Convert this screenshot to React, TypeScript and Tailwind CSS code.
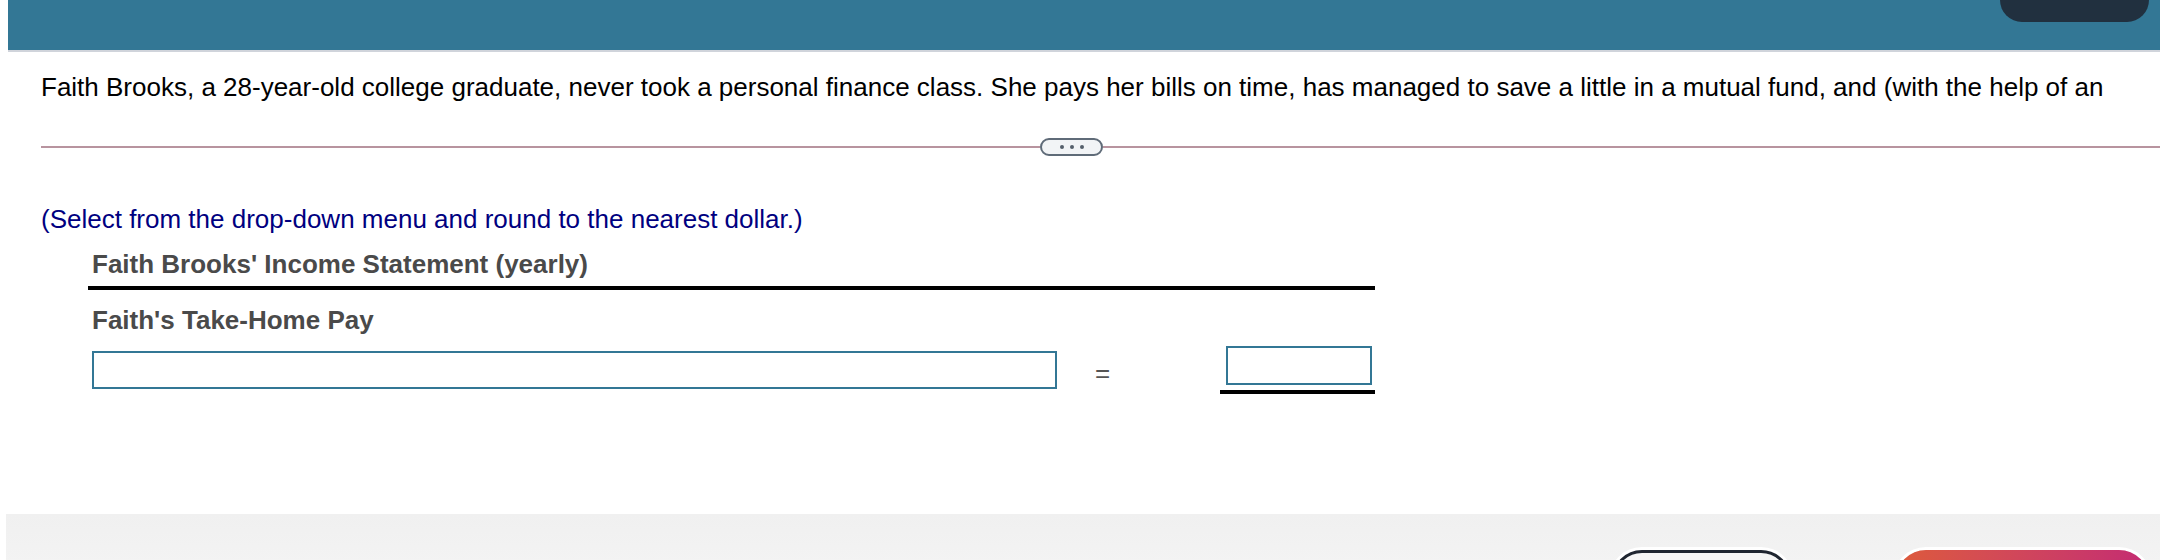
import React from "react";

export default function App() {
  return (
    <div className="w-[2160px] h-[560px] bg-white overflow-hidden flex flex-col font-['Liberation_Sans',Arial,sans-serif]">
      {/* header */}
      <div className="pl-[8px]">
        <div className="h-[50px] bg-[#337795] flex justify-end pr-[11px]">
          <div className="w-[149px] h-[22px] bg-[#21303f] rounded-b-[22px]" />
        </div>
        <div className="h-[2px] bg-[#d0d4db]" />
      </div>

      {/* main */}
      <div className="pl-[41px]">
        <div className="mt-[20px] h-[30px] leading-[30px] text-[26px] text-black whitespace-nowrap overflow-hidden">
          Faith Brooks, a 28-year-old college graduate, never took a personal finance class. She pays her bills on time, has managed to save a little in a mutual fund, and (with the help of an
        </div>

        <div className="mt-[36px] h-[18px] flex items-center">
          <div className="w-[999px] h-[2px] bg-[#b8949f]" />
          <div className="w-[63px] h-[18px] rounded-full border-2 border-[#5f6b78] bg-[#f2f4f6] flex items-center justify-center gap-[6px]">
            <span className="w-[4px] h-[4px] rounded-full bg-[#555f6b]" />
            <span className="w-[4px] h-[4px] rounded-full bg-[#555f6b]" />
            <span className="w-[4px] h-[4px] rounded-full bg-[#555f6b]" />
          </div>
          <div className="flex-1 h-[2px] bg-[#b8949f]" />
        </div>

        <div className="mt-[48px] h-[30px] leading-[30px] text-[26px] text-[#000080]">
          (Select from the drop-down menu and round to the nearest dollar.)
        </div>

        <div className="ml-[47px] w-[1287px]">
          <div className="mt-[15px] h-[30px] leading-[30px] text-[26px] font-bold text-[#4a4a4a] pl-[4px]">
            Faith Brooks' Income Statement (yearly)
          </div>
          <div className="mt-[7px] h-[4px] bg-black" />
          <div className="mt-[15px] h-[30px] leading-[30px] text-[26px] font-bold text-[#4a4a4a] pl-[4px]">
            Faith's Take-Home Pay
          </div>
          <div className="mt-[11px] flex items-start">
            <div className="ml-[4px] mt-[5px] w-[965px] h-[38px] border-2 border-[#337795] bg-white" />
            <div className="w-[163px] h-[48px] pt-[6px] flex items-center pl-[38px] text-[26px] text-[#555]">=</div>
            <div className="w-[155px]">
              <div className="pl-[6px] pr-[3px]">
                <div className="h-[39px] border-2 border-[#337795] bg-white" />
              </div>
              <div className="mt-[5px] h-[4px] bg-black" />
            </div>
          </div>
        </div>
      </div>

      {/* footer */}
      <div className="mt-[120px] ml-[6px] flex-1 bg-linear-to-b from-[#f0f0f0] to-[#f6f6f6] flex justify-end items-start pt-[36px] pr-[11px] gap-[105px]">
        <div className="w-[179px] h-[60px] rounded-[30px] border-[3px] border-[#1f2530] bg-[#f5f5f5] shadow-[0_0_0_3px_white]" />
        <div className="w-[253px] h-[60px] rounded-[30px] bg-linear-to-r from-[#dd5a3a] to-[#c42a72] shadow-[0_0_0_3px_white]" />
      </div>
    </div>
  );
}
